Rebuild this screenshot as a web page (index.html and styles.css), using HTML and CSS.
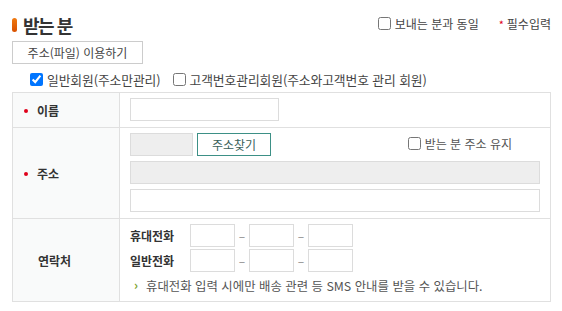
FILE: index.html
```html
<!DOCTYPE html>
<html lang="ko">
<head>
    <meta charset="UTF-8">
    <title>받는 분</title>
    <link rel="stylesheet" href="styles.css">
</head>
<body>
    <div class="wrap">
        <div class="title-row">
            <h2 class="title"><span class="bar"></span>받는 분</h2>
            <div class="title-opts">
                <label class="chk"><input type="checkbox"> 보내는 분과 동일</label>
                <span class="req"><i>*</i>필수입력</span>
            </div>
        </div>

        <button class="btn-file">주소(파일) 이용하기</button>

        <div class="member-type">
            <label class="chk"><input type="checkbox" checked>일반회원(주소만관리)</label>
            <label class="chk"><input type="checkbox">고객번호관리회원(주소와고객번호 관리 회원)</label>
        </div>

        <table class="form-table">
            <tr class="row-name">
                <th><span class="dot"></span>이름</th>
                <td><input type="text" class="inp w-name"></td>
            </tr>
            <tr class="row-addr">
                <th><span class="dot"></span>주소</th>
                <td>
                    <div class="zip-line">
                        <input type="text" class="inp w-zip gray" readonly>
                        <button class="btn-find">주소찾기</button>
                        <label class="chk keep"><input type="checkbox">받는 분 주소 유지</label>
                    </div>
                    <input type="text" class="inp w-full gray" readonly>
                    <input type="text" class="inp w-full">
                </td>
            </tr>
            <tr class="row-tel">
                <th class="no-req">연락처</th>
                <td>
                    <div class="tel-line">
                        <b>휴대전화</b>
                        <input type="text" class="inp w-tel"><span class="dash">–</span>
                        <input type="text" class="inp w-tel"><span class="dash">–</span>
                        <input type="text" class="inp w-tel">
                    </div>
                    <div class="tel-line">
                        <b>일반전화</b>
                        <input type="text" class="inp w-tel"><span class="dash">–</span>
                        <input type="text" class="inp w-tel"><span class="dash">–</span>
                        <input type="text" class="inp w-tel">
                    </div>
                    <p class="note">휴대전화 입력 시에만 배송 관련 등 SMS 안내를 받을 수 있습니다.</p>
                </td>
            </tr>
        </table>
    </div>
</body>
</html>
```

FILE: styles.css
```css
body{
    margin: 0;
    padding: 0;
    background: #fff;
    font-family: "Noto Sans CJK KR", "Noto Sans", sans-serif;
    font-size: 12px;
    color: #444;
}
.wrap{
    width: 539px;
    padding: 0 11px 0 12px;
}
.title-row{
    display: flex;
    justify-content: space-between;
    align-items: center;
    height: 30px;
    margin-top: 10px;
}
.title{
    display: flex;
    align-items: center;
    margin: 0;
    font-size: 18px;
    letter-spacing: -1.5px;
    color: #333;
}
.bar{
    width: 5px;
    height: 14px;
    margin-right: 6px;
    border-radius: 3px;
    background: linear-gradient(#f07a10, #d85000);
}
.title-opts{
    display: flex;
    align-items: center;
    gap: 20px;
    margin-top: -3px;
}
.chk{
    display: inline-flex;
    align-items: center;
    color: #444;
}
.chk input{
    width: 13px;
    height: 13px;
    margin: 0 4px 0 0;
}
.req i{
    font-style: normal;
    font-size: 11px;
    color: #e0001a;
    margin-right: 3px;
}
.btn-file{
    display: block;
    width: 131px;
    height: 23px;
    margin-top: 1px;
    padding: 0;
    background: #fff;
    border: 1px solid #ccc;
    font-family: inherit;
    font-size: 12px;
    color: #444;
}
.member-type{
    display: flex;
    gap: 12px;
    height: 20px;
    align-items: center;
    margin: 5px 0 3px 18px;
    font-size: 12.8px;
    letter-spacing: -0.1px;
}
.form-table{
    width: 100%;
    border-collapse: collapse;
    border-top: 1px solid #9cb8b4;
}
.form-table th,
.form-table td{
    border: 1px solid #e0e0e0;
    vertical-align: top;
}
.form-table th{
    width: 106px;
    background: #f9fafa;
    padding: 0 0 0 11px;
    text-align: left;
    vertical-align: middle;
    font-size: 12px;
    color: #333;
}
.dot{
    display: inline-block;
    width: 4px;
    height: 4px;
    margin: 0 9px 2px 0;
    border-radius: 50%;
    background: #e0001a;
    vertical-align: middle;
}
.form-table th.no-req{
    padding-left: 25px;
}
.form-table td{
    padding: 5px 10px 6px 10px;
}
.row-name td{
    height: 23px;
}
.inp{
    display: block;
    box-sizing: border-box;
    height: 23px;
    margin: 0;
    border: 1px solid #dcdcdc;
    background: #fff;
}
.gray{
    background: #eee;
}
.w-name{
    width: 149px;
}
.w-zip{
    width: 63px;
}
.w-full{
    width: 410px;
    margin-top: 5px;
}
.zip-line{
    display: flex;
    align-items: center;
    margin-bottom: 2px;
}
.btn-find{
    width: 74px;
    height: 23px;
    margin-left: 4px;
    padding: 0;
    background: #fff;
    border: 1px solid #3d9086;
    font-family: inherit;
    font-size: 12px;
    color: #3a5f5a;
}
.keep{
    margin-left: auto;
    margin-right: 28px;
    margin-top: -2px;
    color: #555;
}
.tel-line{
    display: flex;
    align-items: center;
    margin-bottom: 2px;
}
.tel-line b{
    width: 60px;
    color: #333;
}
.w-tel{
    width: 45px;
}
.dash{
    width: 14px;
    text-align: center;
    color: #888;
}
.note{
    margin: 5px 0 0 4px;
    padding-left: 12px;
    position: relative;
    color: #555;
    font-size: 12.4px;
    line-height: 18px;
}
.note::before{
    content: "›";
    position: absolute;
    left: 0;
    top: -1px;
    color: #7ba12a;
    font-weight: bold;
}
```
